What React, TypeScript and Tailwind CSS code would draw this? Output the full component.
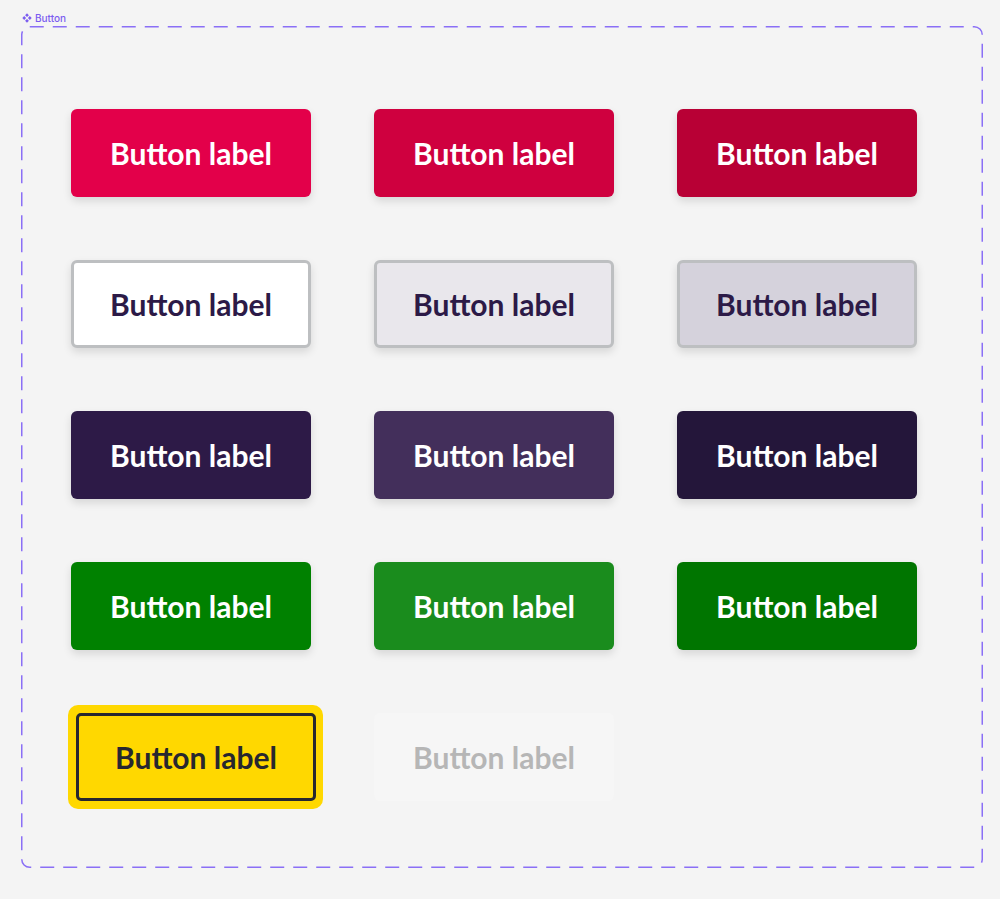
const buttons = [
  { bg: "bg-[#e3004a]", text: "text-white", border: "" },
  { bg: "bg-[#cf003f]", text: "text-white", border: "" },
  { bg: "bg-[#b80035]", text: "text-white", border: "" },
  { bg: "bg-white", text: "text-[#2c1a47]", border: "border-[3px] border-[#bdbfc1]" },
  { bg: "bg-[#e9e7ec]", text: "text-[#2c1a47]", border: "border-[3px] border-[#bdbfc1]" },
  { bg: "bg-[#d5d2dc]", text: "text-[#2c1a47]", border: "border-[3px] border-[#bdbfc1]" },
  { bg: "bg-[#2d1a47]", text: "text-white", border: "" },
  { bg: "bg-[#432f5b]", text: "text-white", border: "" },
  { bg: "bg-[#24163a]", text: "text-white", border: "" },
  { bg: "bg-[#008100]", text: "text-white", border: "" },
  { bg: "bg-[#1a8c1d]", text: "text-white", border: "" },
  { bg: "bg-[#007500]", text: "text-white", border: "" },
];

const labelFont = "font-['Lato',sans-serif] font-bold text-[30px] leading-none";

const App = () => {
  return (
    <div className="min-h-[899px] w-full bg-[#f4f4f4] pl-[21px] pt-[12px]">
      <div className="flex h-[12px] items-center gap-[3px] pl-[1px] font-['Inter',sans-serif] text-[10px] font-medium text-[#7b5cf0]">
        <svg width="10" height="10" viewBox="0 0 10 10" fill="#7b5cf0">
          <path d="M5 0.3 L6.9 2.2 L5 4.1 L3.1 2.2 Z" />
          <path d="M5 5.9 L6.9 7.8 L5 9.7 L3.1 7.8 Z" />
          <path d="M0.3 5 L2.2 3.1 L4.1 5 L2.2 6.9 Z" />
          <path d="M5.9 5 L7.8 3.1 L9.7 5 L7.8 6.9 Z" />
        </svg>
        <span>Button</span>
      </div>
      <div className="relative mt-[2px] h-[842px] w-[962px] pl-[50px] pt-[83px]">
        <svg className="pointer-events-none absolute inset-0" width="962" height="842">
          <rect
            x="0.75"
            y="0.75"
            width="960.5"
            height="840.5"
            rx="8"
            fill="none"
            stroke="#8a6ff6"
            strokeWidth="1.5"
            strokeDasharray="14 9"
          />
        </svg>
        <div className="grid grid-cols-[240px_240px_240px] gap-x-[63px] gap-y-[63px]">
          {buttons.map((b, i) => (
            <div
              key={i}
              className={`flex h-[88px] w-[240px] items-center justify-center rounded-[6px] shadow-[0_4px_8px_rgba(0,0,0,0.12)] ${b.bg} ${b.border}`}
            >
              <span className={`${labelFont} ${b.text}`}>Button label</span>
            </div>
          ))}
          <div className="h-[88px] w-[240px]">
            <div className="-ml-[3px] -mt-[8px] h-[104px] w-[255px] rounded-[10px] bg-[#ffd800] p-[8px]">
              <div className="flex h-[88px] w-[240px] items-center justify-center rounded-[5px] border-[3px] border-[#27272f]">
                <span className={`${labelFont} text-[#27272f]`}>Button label</span>
              </div>
            </div>
          </div>
          <div className="flex h-[88px] w-[240px] items-center justify-center rounded-[6px] bg-[#f6f6f6]">
            <span className={`${labelFont} text-[#b6b6b6]`}>Button label</span>
          </div>
        </div>
      </div>
    </div>
  );
};

export default App;
